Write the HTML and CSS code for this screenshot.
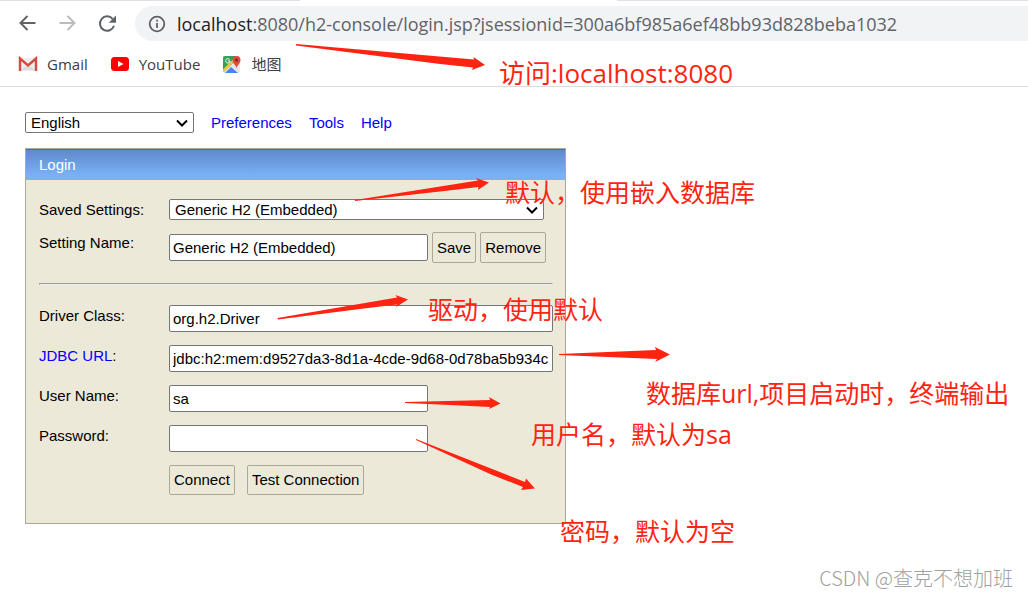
FILE: index.html
```html
<!DOCTYPE html>
<html lang="zh-CN">
<head>
<meta charset="utf-8">
<title>H2 Console</title>
<link rel="stylesheet" href="styles.css">
</head>
<body>
<header class="browser">
  <div class="tab-edge"><span class="active-tab"></span></div>
  <div class="toolbar">
    <button class="nav-button" type="button" aria-label="Back">
      <svg width="18" height="18" viewBox="0 0 18 18" fill="none" stroke="#5f6368" stroke-width="2"><path d="M17.500 8H3M9.500 1L2.500 8l7 7"/></svg>
    </button>
    <button class="nav-button" type="button" aria-label="Forward">
      <svg width="18" height="18" viewBox="0 0 18 18" fill="none" stroke="#babcbe" stroke-width="2"><path d="M1.500 8H16M9.500 1l7 7-7 7"/></svg>
    </button>
    <button class="nav-button" type="button" aria-label="Reload">
      <svg width="18" height="18" viewBox="0 0 18 18"><path d="M16 10.800A7.200 7.200 0 1 1 14.600 3.800" fill="none" stroke="#5f6368" stroke-width="2"/><path d="M18 .5v7.200h-7.200z" fill="#5f6368"/></svg>
    </button>
    <div class="address">
      <svg width="18" height="18" viewBox="0 0 18 18"><circle cx="9" cy="9" r="7.300" fill="none" stroke="#5f6368" stroke-width="1.800"/><path d="M8.100 8h1.800v5H8.100zM8.100 4.800h1.800v1.800H8.100z" fill="#5f6368"/></svg>
      <span class="url"><span class="host">localhost</span>:8080/h2-console/login.jsp?jsessionid=300a6bf985a6ef48bb93d828beba1032</span>
    </div>
  </div>
  <nav class="bookmarks">
    <a href="#gmail">
      <svg width="20" height="20" viewBox="0 0 20 20"><path d="M1 4h18v13H1z" fill="#eeeeee"/><path d="M3 16l7-6 7 6z" fill="#dcdcdc"/><path d="M2 17V4.500l8 7 8-7V17" fill="none" stroke="#d54b3d" stroke-width="2.400"/></svg>
      Gmail</a>
    <a href="#youtube">
      <svg width="20" height="20" viewBox="0 0 20 20"><rect x="1" y="3" width="18" height="14" rx="3.500" fill="#f00"/><path d="M8 7l5.500 3L8 13z" fill="#fff"/></svg>
      YouTube</a>
    <a href="#maps">
      <svg width="20" height="20" viewBox="0 0 20 20"><rect x="1" y="2" width="17" height="17" rx="2" fill="#e4e4e4"/><path d="M3 2h11v5L2 18l-1-1V4q0-2 2-2z" fill="#34a05a"/><path d="M2 18L14 6l4 4v6z" fill="#e8e8e8"/><path d="M1 17L13 5" stroke="#fbcf3b" stroke-width="2"/><path d="M3 19l6-6 7 6z" fill="#4285f4"/><path d="M7.500 5.500A2.200 2.200 0 1 0 8 7H6" fill="none" stroke="#fff" stroke-width="1"/><path d="M14.500 15c0-4-4-5-4-9a4 4 0 0 1 8 0c0 4-4 5-4 9z" fill="#df4b3e"/><circle cx="14.500" cy="6" r="1.500" fill="#7b231e"/></svg>
      地图</a>
  </nav>
</header>

<main class="console">
  <nav class="menu">
    <select class="language" aria-label="Language"><option>English</option></select>
    <a href="#preferences">Preferences</a>
    <a href="#tools">Tools</a>
    <a href="#help">Help</a>
  </nav>
  <form class="login">
    <h1>Login</h1>
    <div class="fields">
      <div class="row">
        <label for="setting">Saved Settings:</label>
        <select id="setting" class="saved"><option>Generic H2 (Embedded)</option></select>
      </div>
      <div class="row">
        <label for="name">Setting Name:</label>
        <div class="naming">
          <input id="name" class="short" type="text" value="Generic H2 (Embedded)">
          <button type="button">Save</button>
          <button type="button">Remove</button>
        </div>
      </div>
    </div>
    <hr>
    <div class="fields connection">
      <div class="row">
        <label for="driver">Driver Class:</label>
        <input id="driver" type="text" value="org.h2.Driver">
      </div>
      <div class="row">
        <label for="url"><a href="#url">JDBC URL</a>:</label>
        <input id="url" type="text" value="jdbc:h2:mem:d9527da3-8d1a-4cde-9d68-0d78ba5b934c">
      </div>
      <div class="row">
        <label for="user">User Name:</label>
        <input id="user" class="short" type="text" value="sa">
      </div>
      <div class="row">
        <label for="password">Password:</label>
        <input id="password" class="short" type="password">
      </div>
      <div class="actions">
        <button type="submit">Connect</button>
        <button type="button">Test Connection</button>
      </div>
    </div>
  </form>
</main>

<div class="notes">
  <svg class="arrows" width="1028" height="597" viewBox="0 0 1028 597" fill="#ff2412">
    <path d="M296 44L474 59.500L473.500 57L485 65L472 70L473 67.500L440 64L296 45.500z"/>
    <path d="M355 200L478 180.500L476 178L489 182.500L478 190L478.500 187L440 191.500L355 201z"/>
    <path d="M277.500 318L397 297.500L395.500 295L408 299.500L396 307L397 304.500L360 309L278 319.500z"/>
    <path d="M559 354L656 350L655 347L670 354.500L655 362L657 359L620 357.500L559 355z"/>
    <path d="M405 402L490 400L489 397L500.500 403.500L489 409L490 407L450 405L405 403z"/>
    <path d="M416 439L525 482L526 478.500L535 488.500L521 490L523 487L490 474L416 440z"/>
  </svg>
  <span class="note visit">访问:localhost:8080</span>
  <span class="note embedded">默认，使用嵌入数据库</span>
  <span class="note driver">驱动，使用默认</span>
  <span class="note database">数据库url,项目启动时，终端输出</span>
  <span class="note user">用户名，默认为sa</span>
  <span class="note password">密码，默认为空</span>
  <span class="watermark">CSDN @查克不想加班</span>
</div>
</body>
</html>
```

FILE: styles.css
```css
* {
  box-sizing: border-box;
}

body {
  position: relative;
  min-height: 100vh;
  margin: 0;
  overflow: hidden;
  background: #fff;
  color: #000;
  font: 15px/22px "Liberation Sans", Arial, sans-serif;
}

a {
  color: #0000ff;
  text-decoration: none;
}

.browser {
  border-bottom: 1px solid #dadce0;
  font-family: "Open Sans", "Noto Sans CJK SC", sans-serif;
}

.tab-edge {
  height: 1px;
  padding-left: 300px;
  background: #dee1e6;
}

.active-tab {
  display: block;
  width: 317px;
  height: 1px;
  background: #fff;
}

.toolbar {
  display: flex;
  align-items: center;
  gap: 22px;
  padding: 5px 0 0 18px;
}

.nav-button {
  display: flex;
  padding: 0;
  border: 0;
  background: none;
}

.address {
  display: flex;
  flex: 1;
  align-items: center;
  gap: 11px;
  height: 35px;
  margin-left: -3px;
  padding-left: 13px;
  border-radius: 18px 0 0 18px;
  background: #f1f3f4;
}

.url {
  color: #5f6368;
  font-size: 18px;
  white-space: nowrap;
}

.host {
  color: #202124;
}

.bookmarks {
  display: flex;
  gap: 22px;
  padding: 12px 18px 11px;
}

.bookmarks a {
  display: flex;
  align-items: center;
  gap: 9px;
  color: #3c4043;
}

.console {
  padding: 25px;
}

.menu {
  display: flex;
  align-items: flex-start;
  gap: 17px;
}

select,
input,
button {
  font: inherit;
  color: #000;
}

select {
  height: 21px;
  padding: 0 24px 0 5px;
  border: 1px solid #767676;
  border-radius: 2px;
  appearance: none;
  background: #fff url("data:image/svg+xml,%3Csvg xmlns='http://www.w3.org/2000/svg' width='12' height='8' viewBox='0 0 12 8'%3E%3Cpath d='M1 1.500l5 5 5-5' fill='none' stroke='%23000' stroke-width='2'/%3E%3C/svg%3E") no-repeat right 5px center;
  line-height: 19px;
}

.language {
  width: 169px;
}

.login {
  max-width: 541px;
  margin-top: 14px;
  border: 1px solid #aca899;
  background: #ece9d8;
}

.login h1 {
  margin: 0;
  padding: 4px 13px;
  border-top: 1px solid #4d70a8;
  background: linear-gradient(#5f8acb, #7ab1f5 85%);
  color: #fff;
  font-size: 15px;
  font-weight: 400;
}

.fields {
  display: flex;
  flex-direction: column;
  gap: 11px;
  padding: 19px 12px 20px 13px;
}

.connection {
  gap: 13px;
  padding: 20px 12px 28px 13px;
}

.row {
  display: grid;
  grid-template-columns: 130px 1fr;
  align-items: start;
}

.saved {
  margin-right: 9px;
}

.naming {
  display: flex;
  align-items: center;
  gap: 4px;
}

input {
  width: 100%;
  height: 27px;
  padding: 1px 3px;
  border: 1px solid #767676;
  border-radius: 2px;
  background: #fff;
}

.short {
  width: 259px;
}

.login button {
  height: 31px;
  padding: 0 4px;
  border: 1px solid #aca899;
  border-radius: 2px;
  background: #ece9d8;
}

hr {
  margin: 0 12px 0 13px;
  border: 1px solid;
  border-color: #9a9a9a #eee #eee #9a9a9a;
}

.actions {
  display: flex;
  gap: 12px;
  padding-left: 130px;
}

.login .actions button {
  height: 30px;
}

.notes {
  position: absolute;
  inset: 0;
  pointer-events: none;
}

.arrows {
  position: absolute;
  top: 0;
  left: 0;
}

.note {
  position: absolute;
  color: #ff2412;
  font: 25px/36px "Open Sans", "Noto Sans CJK SC", sans-serif;
  white-space: nowrap;
}

.visit {
  top: 55px;
  left: 499px;
  font-size: 26px;
}

.embedded {
  top: 174px;
  left: 505px;
}

.driver {
  top: 291px;
  left: 428px;
}

.database {
  top: 375px;
  left: 646px;
}

.note.user {
  top: 416px;
  left: 531px;
}

.note.password {
  top: 513px;
  left: 560px;
}

.watermark {
  position: absolute;
  right: 15px;
  bottom: 5px;
  color: #a0a0a0;
  font: 20px/28px "Noto Sans CJK SC", sans-serif;
  font-weight: 300;
}
```
